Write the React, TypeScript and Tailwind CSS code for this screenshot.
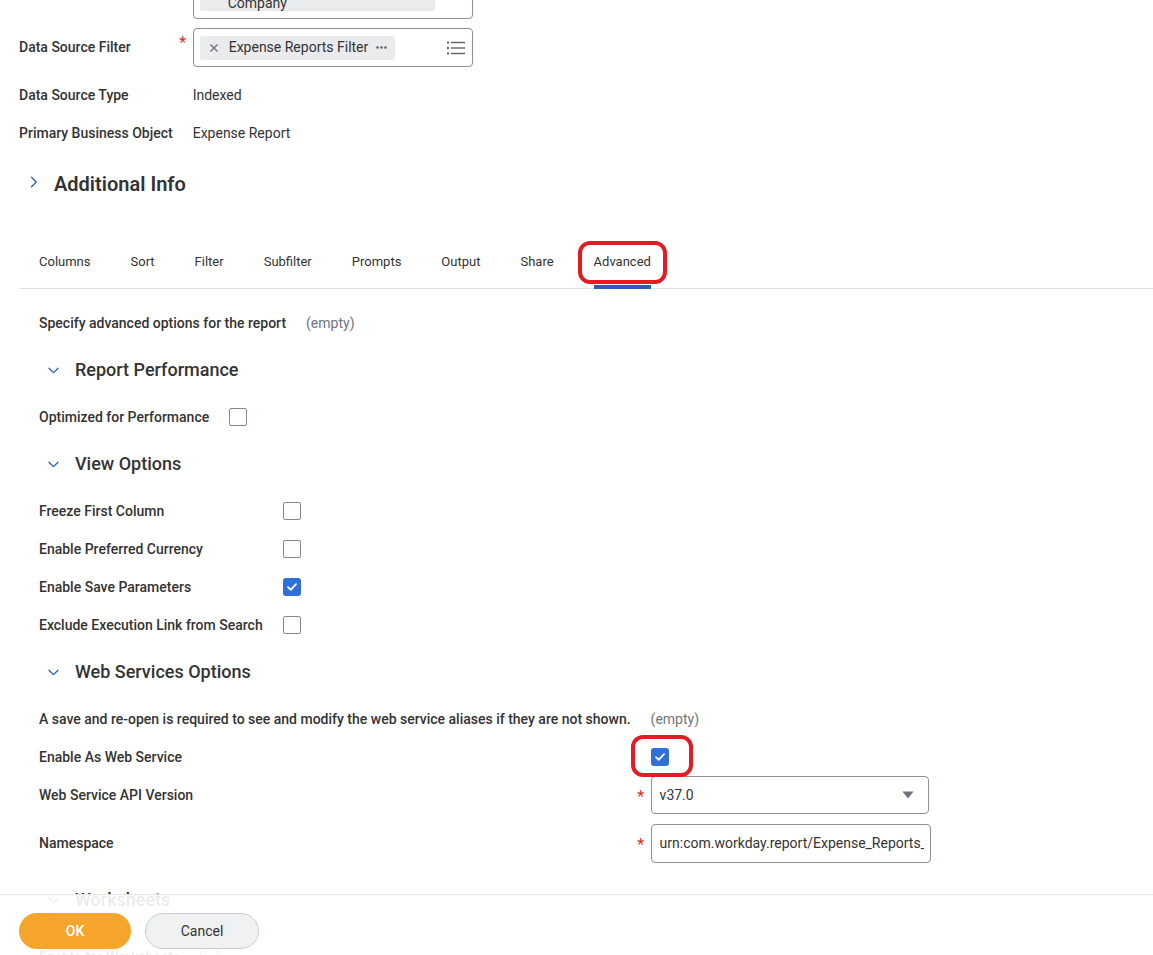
import React from "react";

function Check({ checked = false }: { checked?: boolean }) {
  if (checked) {
    return (
      <span className="flex h-[18px] w-[18px] items-center justify-center rounded-[3px] bg-[#2f6fd8]">
        <svg width="10" height="8" viewBox="0 0 10 8" fill="none">
          <path d="M1 4.2L3.7 6.8L9 1.2" stroke="white" strokeWidth="1.8" strokeLinecap="round" strokeLinejoin="round" />
        </svg>
      </span>
    );
  }
  return <span className="block h-[18px] w-[18px] rounded-[2px] border border-[#7f8890] bg-white" />;
}

function ChevronDown() {
  return (
    <svg width="11" height="7" viewBox="0 0 11 7" fill="none" className="mr-[16px] ml-[9px]">
      <path d="M1 1.2L5.5 5.6L10 1.2" stroke="#2d5ea8" strokeWidth="1.3" strokeLinecap="round" strokeLinejoin="round" />
    </svg>
  );
}

function SectionHeader({ title }: { title: string }) {
  return (
    <div className="my-[9px] flex h-[38px] items-center">
      <ChevronDown />
      <h3 className="-mt-[1px] text-[18px] font-medium text-[#333333]">{title}</h3>
    </div>
  );
}

function Label({ children }: { children: React.ReactNode }) {
  return <div className="flex h-[38px] items-center text-[14px] font-medium text-[#333333]">{children}</div>;
}

function Star({ show = false }: { show?: boolean }) {
  return <div className="flex items-center justify-center pt-[3px] text-[16px] text-[#de2c2c]">{show ? "*" : ""}</div>;
}

function Chip({ children }: { children: React.ReactNode }) {
  return (
    <div className="flex h-[24px] items-center rounded-[3px] bg-[#e9ebed] pr-[8px] pl-[9px] text-[14px] text-[#333333]">
      <svg width="10" height="10" viewBox="0 0 10 10" className="mr-[10px]">
        <path d="M1.5 1.5L8.5 8.5M8.5 1.5L1.5 8.5" stroke="#6b7178" strokeWidth="1.3" />
      </svg>
      {children}
      <svg width="11" height="3" viewBox="0 0 11 3" fill="#555a60" className="ml-[8px]">
        <circle cx="1.5" cy="1.5" r="1.2" />
        <circle cx="5.5" cy="1.5" r="1.2" />
        <circle cx="9.5" cy="1.5" r="1.2" />
      </svg>
    </div>
  );
}

function ListIcon() {
  return (
    <svg width="18" height="14" viewBox="0 0 18 14" fill="#5b6168">
      <rect x="0" y="0.5" width="2" height="2" />
      <rect x="4" y="0.8" width="14" height="1.4" />
      <rect x="0" y="6" width="2" height="2" />
      <rect x="4" y="6.3" width="14" height="1.4" />
      <rect x="0" y="11.5" width="2" height="2" />
      <rect x="4" y="11.8" width="14" height="1.4" />
    </svg>
  );
}

const tabs = ["Columns", "Sort", "Filter", "Subfilter", "Prompts", "Output", "Share", "Advanced"];

export default function App() {
  return (
    <div className="relative min-h-screen bg-white font-['Roboto','Liberation_Sans',sans-serif] text-[#333333]">
      <div className="-mt-[41px] px-[19px] pb-[80px]">
        {/* record fields */}
        <div className="grid grid-cols-[auto_20px_1fr]">
          <Label>Data Source</Label>
          <Star show />
          <div className="flex h-[60px] w-[280px] items-end rounded-[4px] border border-[#8a9097] px-[6px] pb-[7px]">
            <div className="flex h-[44px] w-[235px] items-end rounded-[3px] bg-[#e9ebed] pl-[28px] text-[14px] leading-[16px]">
              Company
            </div>
          </div>

          <div className="mt-[9px] flex h-[39px] items-center text-[14px] font-medium">Data Source Filter</div>
          <div className="mt-[9px]">
            <Star show />
          </div>
          <div className="mt-[9px] flex h-[39px] w-[280px] items-center justify-between rounded-[4px] border border-[#8a9097] pr-[7px] pl-[6px]">
            <Chip>Expense Reports Filter</Chip>
            <ListIcon />
          </div>

          <div className="mt-[9px]">
            <Label>Data Source Type</Label>
          </div>
          <div className="mt-[9px]" />
          <div className="mt-[9px] flex h-[38px] items-center text-[14px]">Indexed</div>

          <Label>Primary Business Object</Label>
          <div />
          <div className="flex h-[38px] items-center text-[14px]">Expense Report</div>
        </div>

        <div className="mt-[13px] flex h-[38px] items-center">
          <svg width="8" height="12" viewBox="0 0 8 12" fill="none" className="mr-[16px] ml-[11px] -mt-[5px]">
            <path d="M1.5 1.2L6.2 6L1.5 10.8" stroke="#2d5ea8" strokeWidth="1.3" strokeLinecap="round" strokeLinejoin="round" />
          </svg>
          <h2 className="text-[20px] font-semibold text-[#333333]">Additional Info</h2>
        </div>

        {/* tabs */}
        <div className="-mr-[19px] mt-[32px] flex h-[54px] border-b border-[#dfe2e5]">
          {tabs.map((t) => (
            <div key={t} className="relative flex items-center px-5 text-[13px] text-[#333333]">
              <span className="relative">
                {t}
                {t === "Advanced" && (
                  <>
                    <span className="absolute -top-[11px] -right-[16px] -bottom-[13px] -left-[16px] rounded-[12px] border-[4px] border-[#e31b23]" />
                    <span className="absolute right-0 -bottom-[18px] left-0 h-[4px] bg-[#2a5bbd]" />
                  </>
                )}
              </span>
            </div>
          ))}
        </div>

        {/* advanced panel */}
        <div className="px-5 pt-[15px]">
          <div className="flex h-[38px] items-center text-[14px]">
            <span className="font-medium">Specify advanced options for the report</span>
            <span className="ml-[20px] text-[#6f757b]">(empty)</span>
          </div>

          <SectionHeader title="Report Performance" />
          <div className="grid grid-cols-[auto_20px_1fr]">
            <Label>Optimized for Performance</Label>
            <div />
            <div className="flex items-center">
              <Check />
            </div>
          </div>

          <SectionHeader title="View Options" />
          <div className="grid grid-cols-[auto_20px_1fr]">
            <Label>Freeze First Column</Label>
            <div />
            <div className="flex items-center">
              <Check />
            </div>
            <Label>Enable Preferred Currency</Label>
            <div />
            <div className="flex items-center">
              <Check />
            </div>
            <Label>Enable Save Parameters</Label>
            <div />
            <div className="flex items-center">
              <Check checked />
            </div>
            <Label>Exclude Execution Link from Search</Label>
            <div />
            <div className="flex items-center">
              <Check />
            </div>
          </div>

          <SectionHeader title="Web Services Options" />
          <div className="grid grid-cols-[auto_20px_1fr]">
            <Label>A save and re-open is required to see and modify the web service aliases if they are not shown.</Label>
            <div />
            <div className="flex items-center text-[14px] text-[#6f757b]">(empty)</div>

            <Label>Enable As Web Service</Label>
            <div />
            <div className="flex items-center">
              <span className="relative">
                <Check checked />
                <span className="absolute -top-[13px] -right-[24px] -bottom-[11px] -left-[20px] rounded-[12px] border-[4px] border-[#e31b23]" />
              </span>
            </div>

            <Label>Web Service API Version</Label>
            <Star show />
            <div className="flex h-[38px] w-[278px] items-center justify-between rounded-[4px] border border-[#8a9097] pr-[14px] pl-[8px] text-[14px]">
              <span>v37.0</span>
              <svg width="12" height="8" viewBox="0 0 12 8">
                <path d="M0.5 0.5H11.5L6 7.5Z" fill="#6b7178" />
              </svg>
            </div>

            <div className="mt-[10px]">
              <Label>Namespace</Label>
            </div>
            <div className="mt-[10px] flex h-[39px] items-center justify-center pt-[3px] text-[16px] text-[#de2c2c]">*</div>
            <div className="mt-[10px] flex h-[39px] w-[280px] items-center rounded-[4px] border border-[#8a9097] pr-[6px] pl-[8px] text-[14px]">
              <span className="flex-1 overflow-hidden whitespace-nowrap">urn:com.workday.report/Expense_Reports_for_Company</span>
            </div>
          </div>

          <div className="mt-[18px] flex h-[38px] items-center">
            <ChevronDown />
            <h3 className="-mt-[1px] text-[18px] font-medium text-[#333333]">Worksheets</h3>
          </div>
          <div className="mt-[19px] grid grid-cols-[auto_20px_1fr]">
            <Label>Enable for Worksheets</Label>
            <div />
            <div className="flex items-center">
              <Check />
            </div>
          </div>
        </div>
      </div>

      {/* footer */}
      <div className="fixed right-0 bottom-0 left-0 flex h-[61px] gap-[14px] border-t border-[#e3e5e8] bg-white/90 px-[19px] pt-[18px]">
        <button className="h-[36px] w-[112px] rounded-full bg-[#f5a42c] text-[14px] font-semibold text-white">OK</button>
        <button className="h-[36px] w-[114px] rounded-full border border-[#c9cdd1] bg-[#f0f1f2] text-[14px] text-[#333333]">
          Cancel
        </button>
      </div>
    </div>
  );
}
